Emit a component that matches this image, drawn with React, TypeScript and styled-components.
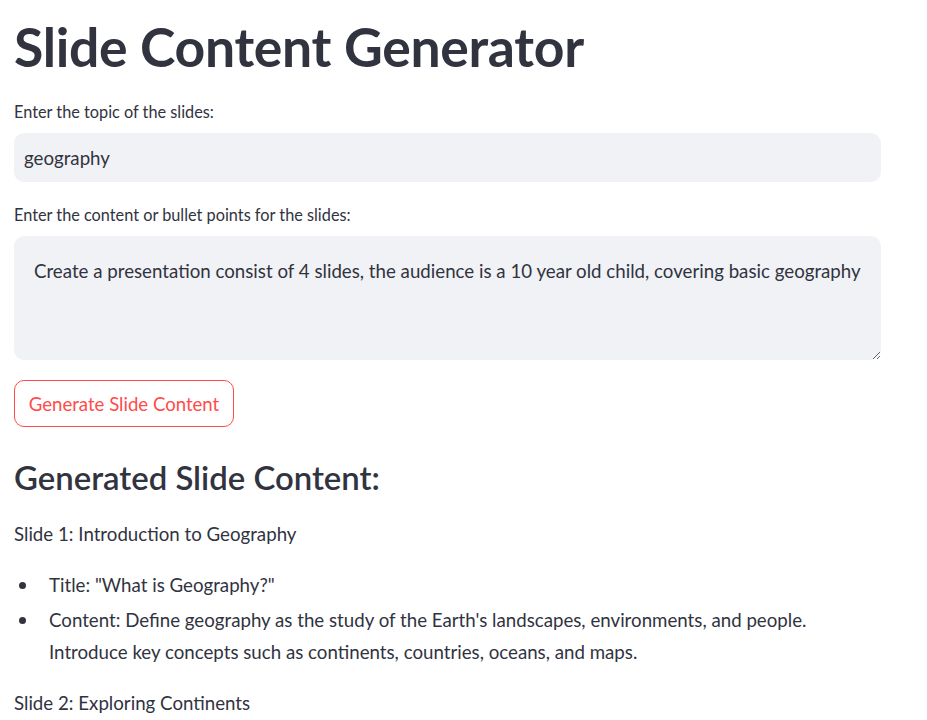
import React from "react";
import styled, { createGlobalStyle } from "styled-components";

const GlobalStyle = createGlobalStyle`
  html, body {
    margin: 0;
    padding: 0;
    background: #ffffff;
  }
  body {
    font-family: "Source Sans Pro", Lato, "Noto Sans", sans-serif;
    color: #31333f;
    -webkit-font-smoothing: antialiased;
  }
`;

const Main = styled.main`
  width: 867px;
  padding: 0 0 0 14px;
  display: flex;
  flex-direction: column;
`;

const Title = styled.h1`
  margin: 0;
  padding: 14px 0 0;
  font-size: 53.5px;
  line-height: 64px;
  font-weight: 700;
  letter-spacing: -0.3px;
  color: #31333f;
`;

const Field = styled.div<{ $top: number }>`
  display: flex;
  flex-direction: column;
  margin-top: ${(p) => p.$top}px;
`;

const Label = styled.label`
  font-size: 16.3px;
  line-height: 22px;
  margin-bottom: 10px;
  color: #31333f;
`;

const TextInput = styled.input`
  box-sizing: border-box;
  height: 49px;
  width: 100%;
  border: none;
  outline: none;
  border-radius: 10px;
  background: #f0f2f6;
  padding: 0 10px;
  font-family: inherit;
  font-size: 18.7px;
  color: #31333f;
`;

const TextArea = styled.textarea`
  box-sizing: border-box;
  height: 124px;
  width: 100%;
  border: none;
  outline: none;
  border-radius: 10px;
  background: #f0f2f6;
  padding: 22px 10px 22px 20px;
  font-family: inherit;
  font-size: 18.7px;
  line-height: 26px;
  color: #31333f;
  resize: vertical;
`;

const Button = styled.button`
  align-self: flex-start;
  margin-top: 20px;
  height: 47px;
  width: 220px;
  padding: 0;
  border: 1px solid #ff4b4b;
  border-radius: 10px;
  background: #ffffff;
  color: #ff4b4b;
  font-family: inherit;
  font-size: 18.6px;
  cursor: pointer;
`;

const SubTitle = styled.h3`
  margin: 30px 0 0;
  font-size: 32.9px;
  line-height: 42px;
  font-weight: 600;
  color: #31333f;
`;

const Para = styled.p<{ $top: number }>`
  margin: ${(p) => p.$top}px 0 0;
  font-size: 18.7px;
  line-height: 32px;
`;

const List = styled.ul`
  margin: 19px 0 0;
  padding: 0;
  list-style: none;
  font-size: 18.7px;
  line-height: 32px;
`;

const Item = styled.li`
  display: grid;
  grid-template-columns: 35px 1fr;
  margin-bottom: 3px;
  &::before {
    content: "";
    width: 7px;
    height: 7px;
    border-radius: 50%;
    background: #31333f;
    margin: 13px 0 0 5px;
  }
`;

export default function App() {
  return (
    <>
      <GlobalStyle />
      <Main>
        <Title>Slide Content Generator</Title>
        <Field $top={23}>
          <Label>Enter the topic of the slides:</Label>
          <TextInput defaultValue="geography" />
        </Field>
        <Field $top={22}>
          <Label>Enter the content or bullet points for the slides:</Label>
          <TextArea defaultValue="Create a presentation consist of 4 slides, the audience is a 10 year old child, covering basic geography" />
        </Field>
        <Button>Generate Slide Content</Button>
        <SubTitle>Generated Slide Content:</SubTitle>
        <Para $top={19}>Slide 1: Introduction to Geography</Para>
        <List>
          <Item>Title: "What is Geography?"</Item>
          <Item>
            Content: Define geography as the study of the Earth's landscapes,
            environments, and people. Introduce key concepts such as continents,
            countries, oceans, and maps.
          </Item>
        </List>
        <Para $top={16}>Slide 2: Exploring Continents</Para>
      </Main>
    </>
  );
}
